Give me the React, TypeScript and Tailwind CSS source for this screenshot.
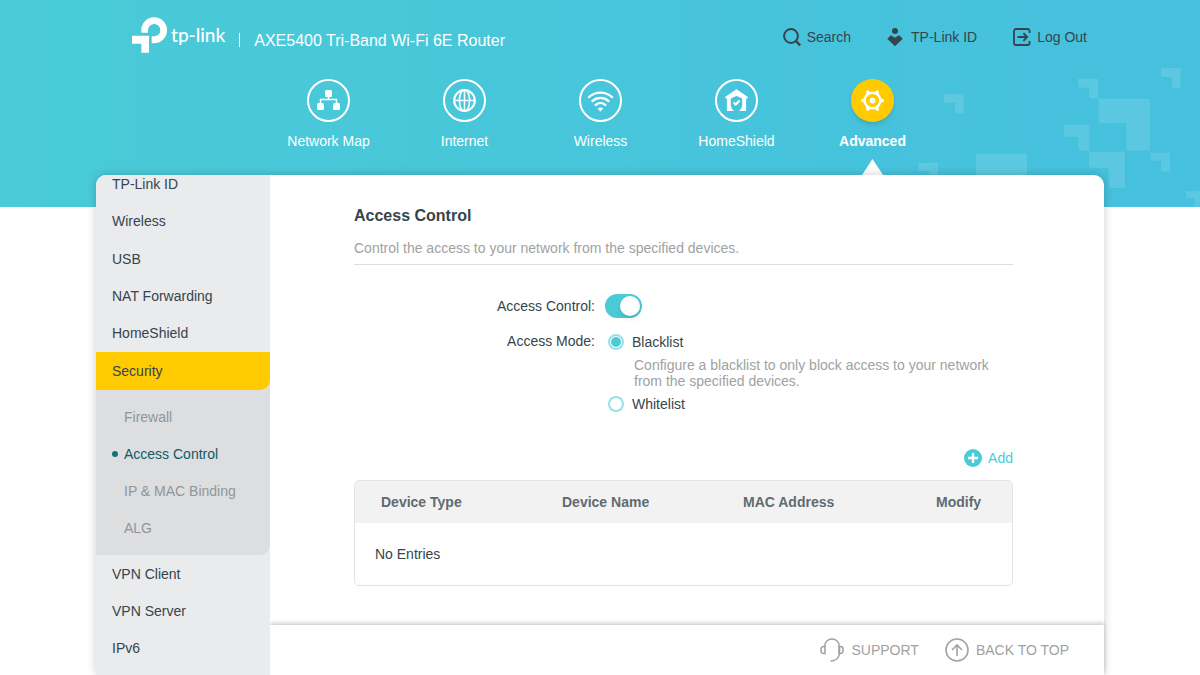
import { useState } from 'react';

const menuTop = ['TP-Link ID', 'Wireless', 'USB', 'NAT Forwarding', 'HomeShield'];
const securityMenu = ['Firewall', 'Access Control', 'IP & MAC Binding', 'ALG'];
const menuBottom = ['VPN Client', 'VPN Server', 'IPv6'];

const tabs = [
  { label: 'Network Map', icon: <NetworkIcon /> },
  { label: 'Internet', icon: <GlobeIcon /> },
  { label: 'Wireless', icon: <WifiIcon /> },
  { label: 'HomeShield', icon: <ShieldHomeIcon /> },
  { label: 'Advanced', icon: <GearIcon /> }
];

function Logo() {
  return (
    <div className="flex h-[38px] items-center gap-[3px] text-white">
      <svg className="h-[38px] w-9" viewBox="0 0 108 114" fill="currentColor" aria-hidden="true">
        <path d="M0 59h51v51H28V83H0z" />
        <path d="M28 50V42a38.500 38.500 0 0 1 77 0 39 39 0 0 1-38.500 40H59V61h7.500A18.500 18.500 0 1 0 48 42.500V50z" />
      </svg>
      <span className="font-['Lato'] text-[19px] font-medium leading-6">tp-link</span>
    </div>
  );
}

function NetworkIcon() {
  return (
    <svg className="h-[23px] w-[23px]" viewBox="0 0 23 23" fill="currentColor" aria-hidden="true">
      <rect x="8" y="1" width="7" height="7" rx="1.500" />
      <rect x="0" y="14" width="7" height="7" rx="1.500" />
      <rect x="16" y="14" width="7" height="7" rx="1.500" />
      <path d="M11.500 7v4M3.500 15v-4.500h16V15" fill="none" stroke="currentColor" strokeWidth="1.500" />
    </svg>
  );
}

function GlobeIcon() {
  return (
    <svg className="h-[23px] w-[23px]" viewBox="0 0 24 24" fill="none" stroke="currentColor" strokeWidth="1.600" aria-hidden="true">
      <circle cx="12" cy="12" r="10.800" strokeWidth="2.200" />
      <path d="M12 1v22M1.200 12h21.600M9.600 1.400c-4 6-4 15 0 21.200M14.400 1.400c4 6 4 15 0 21.200" />
    </svg>
  );
}

function WifiIcon() {
  return (
    <svg className="h-[27px] w-[27px]" viewBox="0 0 28 28" fill="none" stroke="currentColor" strokeWidth="2.400" strokeLinecap="round" aria-hidden="true">
      <path d="M2 10.400c7-6.200 17-6.200 24 0M5.600 14.600c5-4.400 11.800-4.400 16.800 0M9 18.600c3-2.600 7-2.600 10 0" />
      <path d="M11.400 22.400c1.600-1.300 3.600-1.300 5.200 0L14 25.200z" fill="currentColor" strokeWidth="0.400" />
    </svg>
  );
}

function ShieldHomeIcon() {
  return (
    <svg className="h-[23px] w-[23px]" viewBox="0 0 24 24" aria-hidden="true">
      <path d="M12 0.200 23.600 8v2H22V23h-7.600c2.400-1.800 3.600-4.200 3.600-7.200V9.800L12 7.400 6 9.800v6c0 3 1.200 5.400 3.600 7.200H2V10H.4V8z" fill="currentColor" />
      <path d="m9 14 2.200 2.200 4-4.200" fill="none" stroke="currentColor" strokeWidth="2.200" />
    </svg>
  );
}

function GearIcon() {
  return (
    <svg className="h-[23px] w-[23px]" viewBox="0 0 24 24" fill="none" stroke="currentColor" aria-hidden="true">
      <path d="M7.200 3.700h9.600L21.600 12l-4.800 8.300H7.200L2.400 12z" strokeWidth="1.800" strokeLinejoin="round" />
      <circle cx="12" cy="12" r="7.800" strokeWidth="1.800" />
      <g fill="currentColor" stroke="none">
        <circle cx="12" cy="12" r="3" />
        <circle cx="7" cy="3" r="1.700" />
        <circle cx="17" cy="3" r="1.700" />
        <circle cx="22.200" cy="12" r="1.700" />
        <circle cx="17" cy="21" r="1.700" />
        <circle cx="7" cy="21" r="1.700" />
        <circle cx="1.800" cy="12" r="1.700" />
      </g>
    </svg>
  );
}

// Rounded corner blocks scattered over the right end of the banner
function BannerPattern() {
  const blocks = [
    [132, 132, 191, 189, 159, 165],
    [55, 338, 114, 400, 363, 88],
    [534, 86, 594, 145, 113, 567],
    [783, 54, 842, 114, 81, 815],
    [596, 146, 750, 302, 219, 679],
    [492, 225, 568, 302, 261, 535],
    [567, 305, 675, 414, 354, 626],
    [752, 308, 810, 365, 332, 783],
    [857, 423, 916, 482, 445, 883]
  ];
  return (
    <svg className="absolute bottom-0 right-0 h-[157px] w-[300px]" viewBox="0 0 900 471" fill="#fff" fillOpacity="0.12" aria-hidden="true">
      {blocks.map(([x1, y1, x2, y2, barY, colX]) => (
        <path
          key={`${x1}-${y1}`}
          d={`M${x1} ${y1}H${x2}V${y2}H${colX + 8}q-8 0-8-8V${barY}H${x1 + 8}q-8 0-8-8z`}
        />
      ))}
      <path d="M228 311H381V420H228z" />
    </svg>
  );
}

function TopLinks() {
  return (
    <div className="flex h-5 items-center text-[#36444b]">
      <a href="#search" className="flex items-center gap-1.5">
        <svg className="h-[18px] w-[18px]" viewBox="0 0 18 18" fill="none" stroke="currentColor" strokeWidth="2" aria-hidden="true">
          <circle cx="8" cy="8" r="6.900" />
          <path d="m12.800 12.800 4.400 4.600" strokeWidth="2.400" />
        </svg>
        Search
      </a>
      <a href="#tp-link-id" className="ml-9 flex items-center gap-2">
        <svg className="h-[18px] w-4" viewBox="0 0 16 18" fill="currentColor" aria-hidden="true">
          <circle cx="8" cy="3" r="3" />
          <path d="M4 7.600 8 10l4-2.400 3.400 3.200L8 18 .6 10.800z" stroke="currentColor" strokeWidth="0.600" strokeLinejoin="round" />
        </svg>
        TP-Link ID
      </a>
      <a href="#logout" className="ml-9 flex items-center gap-1.5">
        <svg className="h-[18px] w-[18px]" viewBox="0 0 18 18" fill="none" stroke="currentColor" strokeWidth="1.800" aria-hidden="true">
          <path d="M16.600 5V3a2 2 0 0 0-2-2H3a2 2 0 0 0-2 2v12a2 2 0 0 0 2 2h11.600a2 2 0 0 0 2-2v-2" />
          <path d="M4.600 9h9M10.400 5.200 14.200 9l-3.800 3.800" />
        </svg>
        Log Out
      </a>
    </div>
  );
}

function MenuItem({ label }: { label: string }) {
  return (
    <li className="flex flex-1 items-center">
      <a href="#menu">{label}</a>
    </li>
  );
}

function Sidebar() {
  return (
    <nav className="relative z-10 w-[174px] shrink-0 overflow-hidden rounded-tl-[10px] bg-[#eaebed]">
      <ul className="-mt-[10px] flex h-[187px] flex-col pl-4">
        {menuTop.map((label) => (
          <MenuItem key={label} label={label} />
        ))}
      </ul>
      <div className="rounded-br-[10px] bg-[#dddee0]">
        <a href="#security" className="flex h-[38px] items-center rounded-br-[10px] bg-[#ffcb00] pl-4">
          Security
        </a>
        <ul className="flex h-[165px] flex-col py-2 pl-4 text-[#8e9699]">
          {securityMenu.map((label) => (
            <li key={label} className="flex flex-1 items-center">
              <span
                className={`mr-1.5 h-1.5 w-1.5 rounded-full ${label === 'Access Control' ? 'bg-[#1a6f7c]' : ''}`}
              ></span>
              <a href="#security" className={label === 'Access Control' ? 'text-[#0f5a66]' : ''}>
                {label}
              </a>
            </li>
          ))}
        </ul>
      </div>
      <ul className="flex h-[112px] flex-col pl-4">
        {menuBottom.map((label) => (
          <MenuItem key={label} label={label} />
        ))}
      </ul>
    </nav>
  );
}

export default function App() {
  const [enabled, setEnabled] = useState(true);
  const [mode, setMode] = useState('blacklist');

  const radioClass =
    'h-4 w-4 shrink-0 appearance-none rounded-full border-2 border-[#96e2e9] bg-white p-px bg-clip-content checked:bg-[#4acbd6]';

  return (
    <div className="flex min-h-screen flex-col bg-white font-['Liberation_Sans',Arial,sans-serif] text-sm leading-5 text-[#36444b]">
      {/* Banner */}
      <header className="relative h-[207px] shrink-0 bg-linear-to-r from-[#4acbd7] to-[#45c0de]">
        <BannerPattern />
        <div className="relative mx-auto w-[84%] pt-4">
          <div className="flex items-start justify-between pl-9 pr-[17px]">
            <div className="flex items-center text-white">
              <Logo />
              <span className="ml-3.5 mt-2.5 h-3.5 w-px bg-white"></span>
              <h1 className="ml-3.5 mt-3 text-base leading-5">AXE5400 Tri-Band Wi-Fi 6E Router</h1>
            </div>
            <div className="pt-[11px]">
              <TopLinks />
            </div>
          </div>

          <nav className="mt-[25px] flex justify-center pl-px text-white">
            {tabs.map(({ label, icon }) => {
              const active = label === 'Advanced';
              return (
                <a key={label} href="#tab" className="relative flex h-24 w-[136px] flex-col items-center">
                  <span
                    className={`flex h-[43px] w-[43px] items-center justify-center rounded-full ${
                      active ? 'bg-[#ffcb00] shadow-md' : 'border-2 border-white'
                    }`}
                  >
                    {icon}
                  </span>
                  <span className={`mt-[9px] ${active ? 'font-bold' : ''}`}>{label}</span>
                  {active && (
                    <svg className="absolute bottom-0 h-4 w-[21px]" viewBox="0 0 21 16" fill="#fff" aria-hidden="true">
                      <path d="M10.500 0 21 16H0z" />
                    </svg>
                  )}
                </a>
              );
            })}
          </nav>
        </div>
      </header>

      {/* Panel */}
      <div className="relative mx-auto -mt-8 flex w-[84%] flex-1 rounded-t-[10px] bg-white shadow-[0_0_10px_rgba(0,0,0,0.2)]">
        <Sidebar />

        <div className="flex min-w-0 flex-1 flex-col">
          <main className="flex-1 pl-[84px] pr-[91px] pt-[31px]">
            <h2 className="text-base font-bold leading-5">Access Control</h2>
            <p className="mt-3 border-b border-[#dcdddd] pb-1.5 text-[#a0a2a3]">
              Control the access to your network from the specified devices.
            </p>

            <div className="mt-[29px] flex items-center">
              <label htmlFor="access-control" className="w-[241px] text-right">
                Access Control:
              </label>
              <input
                id="access-control"
                type="checkbox"
                role="switch"
                checked={enabled}
                onChange={(e) => setEnabled(e.target.checked)}
                className="ml-2.5 h-6 w-[37px] appearance-none rounded-full bg-[#c8cccd] p-0.5 before:block before:h-5 before:w-5 before:rounded-full before:bg-white before:shadow-md checked:bg-[#4acbd6] checked:before:ml-[13px]"
              />
            </div>

            <div className="mt-[13px] flex items-start" role="radiogroup" aria-labelledby="mode-label">
              <span id="mode-label" className="w-[241px] shrink-0 text-right">
                Access Mode:
              </span>
              <div className="ml-[13px] pt-px">
                <label className="flex items-center gap-2">
                  <input
                    type="radio"
                    name="mode"
                    checked={mode === 'blacklist'}
                    onChange={() => setMode('blacklist')}
                    className={radioClass}
                  />
                  Blacklist
                </label>
                <p className="mb-[5px] ml-[26px] mt-[5px] max-w-[360px] leading-4 text-[#a0a2a3]">
                  Configure a blacklist to only block access to your network from the specified devices.
                </p>
                <label className="flex items-center gap-2">
                  <input
                    type="radio"
                    name="mode"
                    checked={mode === 'whitelist'}
                    onChange={() => setMode('whitelist')}
                    className={radioClass}
                  />
                  Whitelist
                </label>
              </div>
            </div>

            <div className="mt-[34px] flex justify-end">
              <button type="button" className="flex items-center gap-1.5 text-[#4acbd6]">
                <svg className="h-[18px] w-[18px]" viewBox="0 0 18 18" aria-hidden="true">
                  <circle cx="9" cy="9" r="9" fill="currentColor" />
                  <path d="M9 4v10M4 9h10" stroke="#fff" strokeWidth="2.400" />
                </svg>
                Add
              </button>
            </div>

            <div className="mt-3 overflow-hidden rounded-[5px] border border-[#e2e3e3]">
              <table className="w-full table-fixed text-left">
                <thead className="bg-[#f2f2f2] text-[#5f6b70]">
                  <tr className="h-[42px]">
                    <th className="w-[181px] pl-[26px]">Device Type</th>
                    <th className="w-[181px] pl-[26px]">Device Name</th>
                    <th className="w-[181px] pl-[26px]">MAC Address</th>
                    <th className="pl-[38px]">Modify</th>
                  </tr>
                </thead>
                <tbody>
                  <tr className="h-[62px]">
                    <td colSpan={4} className="pl-5">
                      No Entries
                    </td>
                  </tr>
                </tbody>
              </table>
            </div>
          </main>

          <footer className="flex h-[50px] items-center justify-end gap-[26px] bg-white pr-[35px] text-[#a0a2a3] shadow-[0_-2px_4px_rgba(0,0,0,0.2)]">
            <a href="#support" className="flex items-center gap-[7px]">
              <svg className="h-6 w-6" viewBox="0 0 24 24" fill="none" stroke="currentColor" strokeWidth="1.600" aria-hidden="true">
                <path d="M4.500 8.500C5 4 8 1 12 1s7 3 7.500 7.500v7c-.5 4.500-4 7.500-9 7.500" />
                <path d="M5 8.500v7H3.500A2.500 2.500 0 0 1 1 13v-2a2.500 2.500 0 0 1 2.500-2.500zM19 8.500v7h1.500A2.500 2.500 0 0 0 23 13v-2a2.500 2.500 0 0 0-2.500-2.500z" />
              </svg>
              SUPPORT
            </a>
            <a href="#top" className="flex items-center gap-[7px]">
              <svg className="h-6 w-6" viewBox="0 0 24 24" fill="none" stroke="currentColor" strokeWidth="1.600" aria-hidden="true">
                <circle cx="12" cy="12" r="11" />
                <path d="M12 18V7M7 12l5-5 5 5" />
              </svg>
              BACK TO TOP
            </a>
          </footer>
        </div>
      </div>
    </div>
  );
}
